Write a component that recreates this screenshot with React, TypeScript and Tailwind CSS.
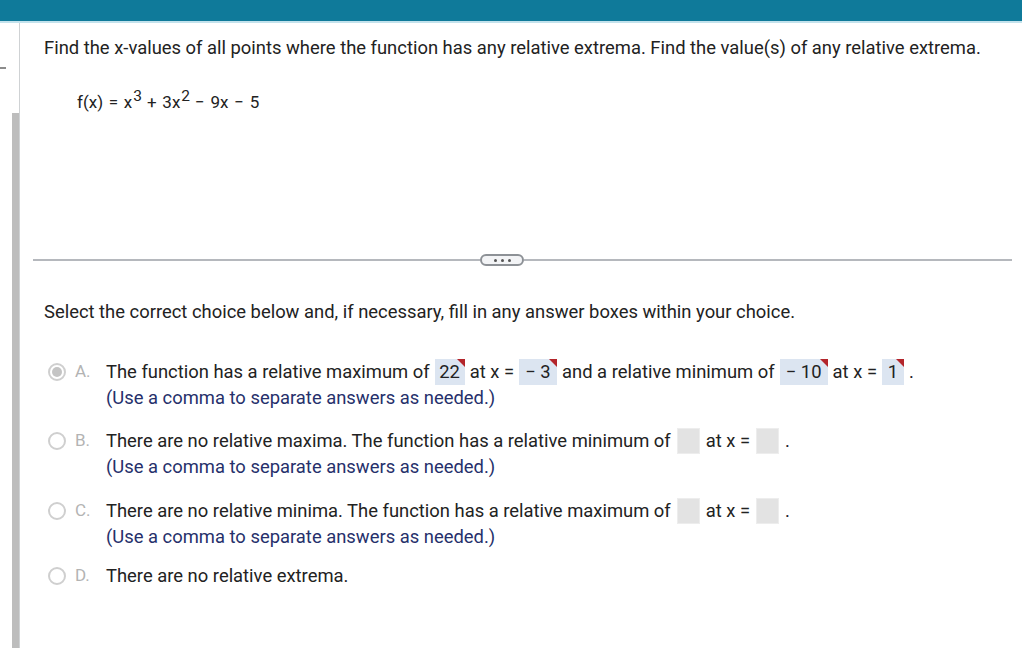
import React from 'react';

function AnswerBox({ value, w }: { value?: string; w: string }) {
  if (!value) {
    return <span className={`inline-block ${w} h-[26px] bg-[#e3e3e3] align-middle mx-[6px] border border-[#ededed]`} />;
  }
  return (
    <span className={`relative inline-flex items-center justify-center ${w} h-[26px] bg-[#dce5f1] align-middle mx-[5px]`}>
      {value}
      <span className="absolute right-0 top-0 w-0 h-0 border-t-[8px] border-l-[8px] border-t-[#b3252b] border-l-transparent" />
    </span>
  );
}

function Radio({ checked }: { checked?: boolean }) {
  return (
    <span className="w-[18px] h-[18px] rounded-full border-2 border-[#cfcfcf] flex items-center justify-center shrink-0">
      {checked && <span className="w-[10px] h-[10px] rounded-full bg-[#c4c4c4]" />}
    </span>
  );
}

function Choice({ letter, checked, children, note }: { letter: string; checked?: boolean; children: React.ReactNode; note?: boolean }) {
  return (
    <div className="flex">
      <div className="flex items-center h-[30px] pl-[28px] w-[86px] gap-[9px]">
        <Radio checked={checked} />
        <span className="text-[#b3b3b3] text-[17px]">{letter}</span>
      </div>
      <div>
        <div className="flex items-center h-[30px] whitespace-nowrap">{children}</div>
        {note && <div className="text-[#26306b] leading-[24px] -mt-[1px]">(Use a comma to separate answers as needed.)</div>}
      </div>
    </div>
  );
}

export default function App() {
  return (
    <div className="w-[1022px] h-[648px] overflow-hidden bg-white text-[#222] text-[18.4px] flex flex-col" style={{ fontFamily: 'Roboto, "Noto Sans", sans-serif' }}>
      <div className="h-[23px] shrink-0 bg-[#0f7a9a] border-b-2 border-[#c3e2ec]" />
      <div className="flex flex-1 min-h-0">
        <div className="w-[20px] shrink-0 border-r border-[#cfd2d4] flex flex-col">
          <div className="mt-[44px] w-[6px] h-[2px] bg-[#8c8c8c]" />
          <div className="mt-[44px] ml-[12px] w-[7px] flex-1 bg-[#bdbdbd]" />
        </div>
        <div className="flex-1 flex flex-col">
          <p className="pl-[24px] pt-[13px] leading-[24px]">
            Find the x-values of all points where the function has any relative extrema. Find the value(s) of any relative extrema.
          </p>
          <p className="pl-[57px] pt-[31px] text-[17px] leading-[22px] [word-spacing:1.5px]">
            f(x) = x<sup className="text-[15.5px] relative -top-[7px] ml-[1px] mr-[5px]">3</sup>+ 3x<sup className="text-[15.5px] relative -top-[7px] ml-[1px] mr-[5px]">2</sup>− 9x − 5
          </p>
          <div className="mt-[141px] ml-[13px] mr-[10px] flex items-center">
            <div className="w-[447px] h-[2px] bg-[#b5b8bd]" />
            <div className="w-[44px] h-[12px] rounded-full border-2 border-[#8d9196] bg-[#f3f4f6] flex items-center justify-center gap-[4px]">
              <span className="w-[3px] h-[3px] rounded-full bg-[#555]" />
              <span className="w-[3px] h-[3px] rounded-full bg-[#555]" />
              <span className="w-[3px] h-[3px] rounded-full bg-[#555]" />
            </div>
            <div className="flex-1 h-[2px] bg-[#b5b8bd]" />
          </div>
          <p className="pl-[24px] mt-[34px] leading-[24px]">
            Select the correct choice below and, if necessary, fill in any answer boxes within your choice.
          </p>
          <div className="mt-[33px] flex flex-col">
            <Choice letter="A." checked note>
              The function has a relative maximum of
              <AnswerBox value="22" w="w-[30px]" />
              at x =
              <AnswerBox value="− 3" w="w-[38px]" />
              and a relative minimum of
              <AnswerBox value="− 10" w="w-[48px]" />
              at x =
              <AnswerBox value="1" w="w-[22px]" />.
            </Choice>
            <div className="h-[16px]" />
            <Choice letter="B." note>
              There are no relative maxima. The function has a relative minimum of
              <AnswerBox w="w-[23px]" />
              at x =
              <AnswerBox w="w-[23px]" />.
            </Choice>
            <div className="h-[17px]" />
            <Choice letter="C." note>
              There are no relative minima. The function has a relative maximum of
              <AnswerBox w="w-[23px]" />
              at x =
              <AnswerBox w="w-[23px]" />.
            </Choice>
            <div className="h-[12px]" />
            <Choice letter="D.">There are no relative extrema.</Choice>
          </div>
        </div>
      </div>
    </div>
  );
}
